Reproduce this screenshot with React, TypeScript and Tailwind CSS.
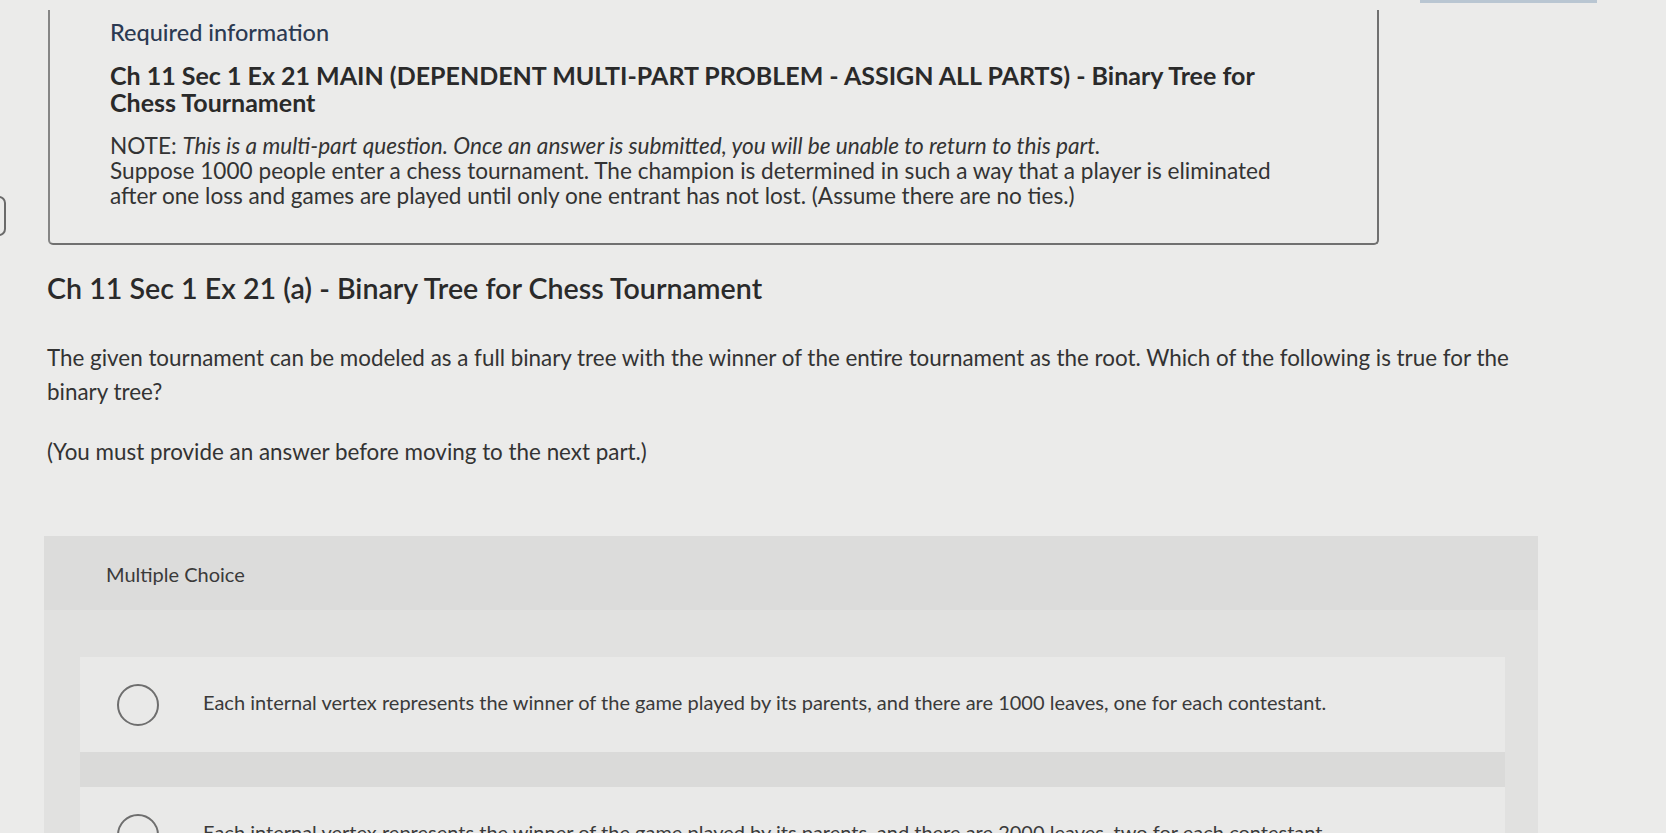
import React from "react";

const font = { fontFamily: '"Lato", "Open Sans", "Liberation Sans", sans-serif' };

export default function App() {
  return (
    <div
      className="relative w-full min-h-[833px] overflow-hidden bg-[#ebebea] text-[#333333]"
      style={font}
    >
      {/* decorative top strip and edge artifact */}
      <div className="absolute left-[1420px] top-0 h-[3px] w-[177px] bg-[#b9c6d2]" />
      <div className="absolute left-[-8px] top-[196px] h-[40px] w-[14px] rounded-full border-2 border-[#6a6a6a]" />

      {/* Required information box */}
      <div className="pl-[48px] pt-[10px]">
        <div className="w-[1331px] rounded-b-[5px] border-x-2 border-b-2 border-[#858585] border-r-[#707070] border-b-[#707070] pl-[60px] pt-[8px] pb-[35px]">
          <div className="text-[23.5px] leading-[28px] font-medium text-[#2c3a52]">Required information</div>
          <div className="mt-[16px] text-[25px] leading-[27px] font-bold text-[#2a2a2a]">
            <div className="whitespace-nowrap">Ch 11 Sec 1 Ex 21 MAIN (DEPENDENT MULTI-PART PROBLEM - ASSIGN ALL PARTS) - Binary Tree for</div>
            <div className="whitespace-nowrap">Chess Tournament</div>
          </div>
          <div className="mt-[17px] text-[22.6px] leading-[25px] text-[#333333]">
            <div className="whitespace-nowrap">
              NOTE: <span className="italic">This is a multi-part question. Once an answer is submitted, you will be unable to return to this part.</span>
            </div>
            <div className="whitespace-nowrap">Suppose 1000 people enter a chess tournament. The champion is determined in such a way that a player is eliminated</div>
            <div className="whitespace-nowrap">after one loss and games are played until only one entrant has not lost. (Assume there are no ties.)</div>
          </div>
        </div>
      </div>

      {/* Part (a) */}
      <div className="pl-[47px]">
        <h2 className="mt-[27px] text-[28.6px] leading-[32px] font-semibold text-[#2a2a2a]">
          Ch 11 Sec 1 Ex 21 (a) - Binary Tree for Chess Tournament
        </h2>
        <div className="mt-[37px] text-[22.4px] leading-[34px] text-[#333333]">
          <div className="whitespace-nowrap">The given tournament can be modeled as a full binary tree with the winner of the entire tournament as the root. Which of the following is true for the</div>
          <div className="whitespace-nowrap">binary tree?</div>
        </div>
        <div className="mt-[26px] text-[22.4px] leading-[34px] text-[#333333]">
          (You must provide an answer before moving to the next part.)
        </div>
      </div>

      {/* Multiple choice panel */}
      <div className="ml-[44px] mt-[67px] w-[1494px] bg-[#e1e1e0]">
        <div className="flex h-[74px] items-center bg-[#dcdcdb] pl-[62px] pt-[1px] text-[20px] text-[#3a3a3a]">
          Multiple Choice
        </div>
        <div className="pt-[47px] pl-[36px] pr-[33px]">
          <div className="flex h-[95px] items-center bg-[#e9e9e8] pl-[37px]">
            <div className="h-[42px] w-[42px] shrink-0 rounded-full border-2 border-[#6e6e6e]" />
            <div className="ml-[44px] -mt-[6px] whitespace-nowrap text-[20px] text-[#3a3a3a]">
              Each internal vertex represents the winner of the game played by its parents, and there are 1000 leaves, one for each contestant.
            </div>
          </div>
          <div className="h-[35px] bg-[#dadad9]" />
          <div className="flex h-[95px] items-center bg-[#e9e9e8] pl-[37px]">
            <div className="h-[42px] w-[42px] shrink-0 rounded-full border-2 border-[#6e6e6e]" />
            <div className="ml-[44px] -mt-[6px] whitespace-nowrap text-[20px] text-[#3a3a3a]">
              Each internal vertex represents the winner of the game played by its parents, and there are 2000 leaves, two for each contestant.
            </div>
          </div>
        </div>
      </div>
    </div>
  );
}
